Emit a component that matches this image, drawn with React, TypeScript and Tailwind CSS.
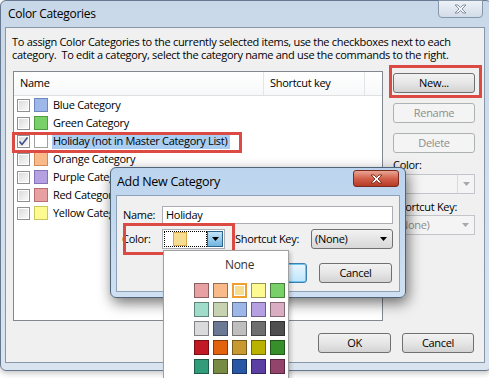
import React from "react";

const CATEGORIES = [
  { name: "Blue Category", color: "#9db7e8", border: "#6c87c0" },
  { name: "Green Category", color: "#78d168", border: "#4f9c42" },
  { name: "Holiday (not in Master Category List)", color: "#ffffff", border: "#a0a0a0", checked: true },
  { name: "Orange Category", color: "#f9ba89", border: "#d48a54" },
  { name: "Purple Category", color: "#b5a1e2", border: "#8672b8" },
  { name: "Red Category", color: "#e7a1a2", border: "#b96d6f" },
  { name: "Yellow Category", color: "#fcfa90", border: "#c9c65a" },
];

const PALETTE = [
  ["#e7a1a2", "#f9ba89", "#f7dd8f", "#fcfa90", "#78d168"],
  ["#9fdcc9", "#c6d2b0", "#9db7e8", "#b5a1e2", "#daaec2"],
  ["#dad9dc", "#6b7994", "#bfbfbf", "#6f6f6f", "#4f4f4f"],
  ["#c11a25", "#e2620d", "#c79930", "#b9b300", "#368f2b"],
  ["#329b7a", "#778b45", "#2858a5", "#5c3fa3", "#93446b"],
];

function Checkbox({ checked }: { checked?: boolean }) {
  return (
    <span className="w-[13px] h-[13px] border border-[#8e8f8f] bg-white p-[1px] flex-none">
      <span className="relative block w-full h-full bg-gradient-to-br from-[#dcdcdc] to-[#f8f8f8]">
        {checked && (
          <svg className="absolute -left-[1px] -top-[1px]" width="11" height="11" viewBox="0 0 11 11">
            <path d="M1.5 5.5 L4 8.5 L9.5 1.5" fill="none" stroke="#3d4f8a" strokeWidth="1.6" />
          </svg>
        )}
      </span>
    </span>
  );
}

function Button({ label, disabled, className = "" }: { label: string; disabled?: boolean; className?: string }) {
  return (
    <div
      className={`h-[20px] rounded-[3px] border flex items-center justify-center text-[11px] ${
        disabled
          ? "border-[#adb2b5] bg-[#f4f4f4] text-[#8d8d8d]"
          : "border-[#707070] bg-gradient-to-b from-[#f2f2f2] via-[#e6e6e6] to-[#d3d3d3] text-black"
      } ${className}`}
    >
      {label}
    </div>
  );
}

function Arrow({ color = "#000" }: { color?: string }) {
  return (
    <svg width="7" height="4" viewBox="0 0 7 4">
      <path d="M0 0 H7 L3.5 4 Z" fill={color} />
    </svg>
  );
}

function RedBox({ className }: { className: string }) {
  return <div className={`absolute border-[3px] border-[#dc4a44] pointer-events-none ${className}`} />;
}

export default function App() {
  return (
    <div className="relative w-[489px] h-[378px] overflow-hidden bg-white font-['Open_Sans',sans-serif] text-[11px] tracking-[-0.3px] text-black">
      {/* MAIN WINDOW */}
      <div className="w-[492px] h-[371px] rounded-[6px] border border-[#66788f] bg-gradient-to-b from-[#c9d8e8] to-[#d9e4ef] flex flex-col shadow-[0_2px_6px_rgba(0,0,0,0.25)]">
        <div className="h-[26px] flex justify-between pl-[7px] pr-[8px]">
          <span className="text-[12px] leading-[26px] text-black">Color Categories</span>
          <div className="w-[45px] h-[18px] -mt-[1px] rounded-b-[4px] border border-[#8696ab] bg-gradient-to-b from-[#eef2f7] to-[#d2dce8] flex items-center justify-center">
            <svg width="13" height="10" viewBox="0 0 13 10">
              <path d="M1 1 H4 L6.5 3.5 L9 1 H12 L8 5 L12 9 H9 L6.5 6.5 L4 9 H1 L5 5 Z" fill="#f4f6f9" stroke="#7b8798" strokeWidth="0.9" />
            </svg>
          </div>
        </div>

        <div className="ml-[4px] w-[480px] h-[336px] border border-[#8797aa] bg-[#f0f0f0] pl-[7px] pr-[9px]">
          <p className="-ml-[1px] pt-[8px] leading-[12.5px] whitespace-nowrap">
            To assign Color Categories to the currently selected items, use the checkboxes next to each
            <br />
            category.&nbsp; To edit a category, select the category name and use the commands to the right.
          </p>

          <div className="flex mt-[10px]">
            {/* LIST */}
            <div className="w-[370px] h-[250px] border border-[#828790] bg-white">
              <div className="h-[24px] flex border-b border-[#e0e0e0] bg-gradient-to-b from-white to-[#f7f8f9]">
                <div className="w-[250px] pl-[6px] flex items-center border-r border-[#e3e5e8]">Name</div>
                <div className="w-[101px] pl-[6px] flex items-center border-r border-[#e3e5e8]">Shortcut key</div>
              </div>
              {CATEGORIES.map((c) => (
                <div key={c.name} className="h-[18px] flex items-center pl-[3px]">
                  <Checkbox checked={c.checked} />
                  <span
                    className="ml-[4px] w-[14px] h-[14px] border flex-none"
                    style={{ backgroundColor: c.color, borderColor: c.border }}
                  />
                  <span className={`ml-[4px] px-[1px] leading-[16px] ${c.checked ? "bg-[#a9cef2] pr-[3px]" : ""}`}>{c.name}</span>
                </div>
              ))}
            </div>

            {/* RIGHT COLUMN */}
            <div className="ml-[10px] w-[82px] pt-[2px] flex flex-col">
              <Button label="New..." />
              <Button label="Rename" disabled className="mt-[10px]" />
              <Button label="Delete" disabled className="mt-[10px]" />
              <span className="mt-[5px] leading-[14px]">Color:</span>
              <div className="mt-[2px] h-[20px] border border-[#c2c5ca] bg-[#f4f4f4] flex justify-end">
                <div className="w-[17px] border-l border-[#dadada] flex items-center justify-center">
                  <Arrow color="#a8a8a8" />
                </div>
              </div>
              <span className="mt-[6px] leading-[14px]">Shortcut Key:</span>
              <div className="mt-[1px] h-[20px] border border-[#c2c5ca] bg-[#f4f4f4] flex items-center justify-between pl-[3px] text-[#8d8d8d]">
                <span>(None)</span>
                <div className="w-[17px] flex items-center justify-center">
                  <Arrow color="#a8a8a8" />
                </div>
              </div>
            </div>
          </div>

          <div className="mt-[12px] flex justify-end gap-[11px] pr-[1px]">
            <Button label="OK" className="w-[73px]" />
            <Button label="Cancel" className="w-[72px]" />
          </div>
        </div>
      </div>

      <RedBox className="left-[12px] top-[132px] w-[230px] h-[21px]" />
      <RedBox className="left-[389px] top-[65px] w-[93px] h-[33px]" />

      {/* ADD NEW CATEGORY DIALOG */}
      <div className="absolute left-[110px] top-[167px] w-[296px] h-[131px] rounded-[6px] border border-[#4f6479] bg-gradient-to-b from-[#bcd4ee] to-[#cfe0f2] flex flex-col shadow-[2px_5px_14px_rgba(0,0,0,0.55)]">
        <div className="h-[27px] flex justify-between pl-[6px] pr-[6px]">
          <span className="text-[12.5px] leading-[28px]">Add New Category</span>
          <div className="mt-[2px] w-[46px] h-[17px] rounded-[3px] border border-[#7a2b20] bg-gradient-to-b from-[#e9a595] via-[#d2614c] to-[#b63a24] flex items-center justify-center">
            <svg width="13" height="10" viewBox="0 0 13 10">
              <path d="M1 1 H4 L6.5 3.5 L9 1 H12 L8 5 L12 9 H9 L6.5 6.5 L4 9 H1 L5 5 Z" fill="#ffffff" stroke="#6d2a20" strokeWidth="0.9" />
            </svg>
          </div>
        </div>
        <div className="ml-[5px] w-[284px] h-[97px] border border-[#8da2b9] bg-[#f0f0f0]">
          <div className="mt-[10px] flex items-center h-[18px]">
            <span className="w-[45px] pl-[6px]">Name:</span>
            <div className="w-[231px] h-[18px] border border-[#abadb3] bg-white pl-[3px] leading-[16px]">Holiday</div>
          </div>
          <div className="mt-[5px] flex items-center h-[20px]">
            <span className="w-[45px] pl-[5px]">Color:</span>
            <div className="w-[63px] h-[20px] border border-[#abadb3] bg-white flex p-[1px]">
              <div className="w-[44px] h-full border border-dotted border-black flex items-center pl-[8px]">
                <span className="w-[14px] h-[14px] bg-[#f7dd8f] border border-[#d9a94e]" />
              </div>
              <div className="w-[16px] h-full border border-[#2c628b] bg-gradient-to-b from-[#c3e4f8] to-[#6fb5e0] flex items-center justify-center">
                <Arrow />
              </div>
            </div>
            <span className="ml-[10px] w-[76px]">Shortcut Key:</span>
            <div className="w-[82px] h-[20px] rounded-[3px] border border-[#707070] bg-gradient-to-b from-[#f2f2f2] to-[#d8d8d8] flex items-center justify-between pl-[3px] pr-[5px]">
              <span>(None)</span>
              <Arrow />
            </div>
          </div>
          <div className="mt-[14px] flex justify-end gap-[12px] pr-[7px]">
            <div className="w-[73px] h-[20px] rounded-[3px] border border-[#3c7fb1] bg-gradient-to-b from-[#eaf6fd] to-[#bee6fd] shadow-[inset_0_0_0_1px_#6fc6f3]" />
            <Button label="Cancel" className="w-[73px]" />
          </div>
        </div>
      </div>

      <RedBox className="left-[123px] top-[223px] w-[112px] h-[32px]" />

      {/* COLOR POPUP */}
      <div className="absolute left-[163px] top-[250px] w-[126px] h-[140px] border border-[#a0a0a0] bg-white shadow-[2px_2px_4px_rgba(0,0,0,0.2)] pl-[30px]">
        <div className="w-[91px] text-center text-[12px] mt-[6px] leading-[16px] text-[#333]">None</div>
        <div className="mt-[10px] grid grid-cols-5 gap-[4px] w-[91px]">
          {PALETTE.flat().map((c, i) =>
            i === 2 ? (
              <span key={i} className="w-[15px] h-[15px] border-2 border-[#f0a030] p-[1px]">
                <span className="block w-full h-full" style={{ backgroundColor: c }} />
              </span>
            ) : (
              <span key={i} className="w-[15px] h-[15px] border border-black/40" style={{ backgroundColor: c }} />
            )
          )}
        </div>
      </div>
    </div>
  );
}
